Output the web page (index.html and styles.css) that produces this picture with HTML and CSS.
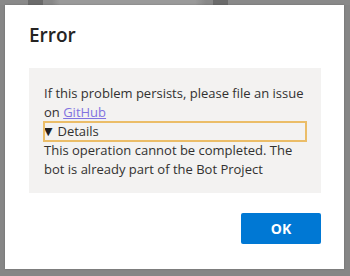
FILE: index.html
```html
<!DOCTYPE html>
<html lang="en">
<head>
<meta charset="utf-8">
<title>Error</title>
<link rel="stylesheet" href="styles.css">
</head>
<body>
<div class="backdrop">
  <div class="dialog" role="dialog" aria-labelledby="dlg-title">
    <h1 class="title" id="dlg-title">Error</h1>
    <div class="message">
      <p class="line">If this problem persists, please file an issue on <a class="link" href="#">GitHub</a></p>
      <details class="details" open>
        <summary class="summary">Details</summary>
        <p class="line">This operation cannot be completed. The bot is already part of the Bot Project</p>
      </details>
    </div>
    <div class="footer">
      <button class="ok" type="button">OK</button>
    </div>
  </div>
</div>
</body>
</html>
```
FILE: styles.css
```css
* { box-sizing: border-box; }
html, body { margin: 0; padding: 0; }
body {
  width: 350px;
  height: 276px;
  font-family: "Open Sans", "Noto Sans", sans-serif;
  color: #323130;
  background:
    linear-gradient(to right,
      #898989 0 28px, #6b6b6b 28px 43px, #888888 43px 52px,
      #9a9a9a 60px 195px, #888888 206px 213px,
      #6b6b6b 213px 228px, #898989 228px 100%) top left / 100% 5px no-repeat,
    #868686;
}
.backdrop {
  padding: 5px 6px 7px 5px;
  height: 100%;
  display: flex;
}
.dialog {
  flex: 1;
  background: #ffffff;
  padding: 16px 23px 24px 24px;
  display: flex;
  flex-direction: column;
  box-shadow: 0 0 2px rgba(0,0,0,0.2);
}
.title {
  margin: 0;
  font-size: 19px;
  line-height: 28px;
  font-weight: 600;
  color: #252423;
}
.message {
  margin-top: 19px;
  background: #f3f2f1;
  padding: 16px 15px 14px 15px;
  font-size: 13px;
  line-height: 19px;
  color: #323130;
}
.line { margin: 0; }
.link { color: #8272e0; text-decoration: underline; }
.details { margin: 0; }
.summary {
  list-style: none;
  display: flex;
  align-items: center;
  gap: 5px;
  outline: 2px solid #ebbd68;
  outline-offset: -1px;
  cursor: pointer;
}
.summary::-webkit-details-marker { display: none; }
.summary::before {
  content: "\25BC";
  font-family: "DejaVu Sans", sans-serif;
  font-size: 11px;
  line-height: 19px;
  color: #201f1e;
}
.footer {
  margin-top: 20px;
  display: flex;
  justify-content: flex-end;
}
.ok {
  width: 80px;
  height: 31px;
  border: none;
  border-radius: 2px;
  background: #0078d4;
  color: #ffffff;
  font-family: "Open Sans", "Noto Sans", sans-serif;
  font-size: 14px;
  font-weight: 700;
  padding: 0;
}
```
